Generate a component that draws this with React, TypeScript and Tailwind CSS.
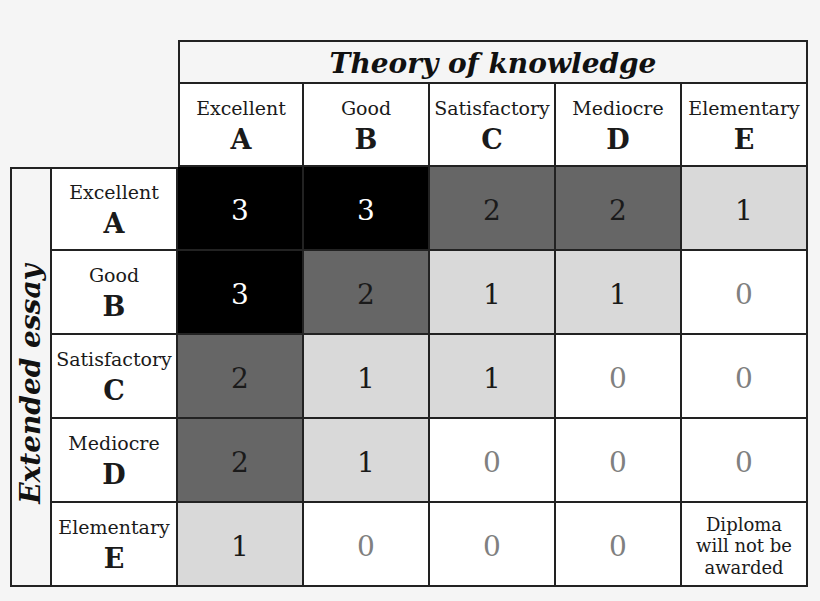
import React from "react";

const grades = [
  ["Excellent", "A"],
  ["Good", "B"],
  ["Satisfactory", "C"],
  ["Mediocre", "D"],
  ["Elementary", "E"],
];

const data: (number | null)[][] = [
  [3, 3, 2, 2, 1],
  [3, 2, 1, 1, 0],
  [2, 1, 1, 0, 0],
  [2, 1, 0, 0, 0],
  [1, 0, 0, 0, null],
];

function bgFor(v: number | null) {
  if (v === 3) return "#000000";
  if (v === 2) return "#666666";
  if (v === 1) return "#d9d9d9";
  return "#ffffff";
}
function fgFor(v: number | null) {
  if (v === 3) return "#ffffff";
  if (v === 0) return "#808080";
  return "#1a1a1a";
}

const font = { fontFamily: '"DejaVu Serif", serif' };

function Label({ w, l }: { w: string; l: string }) {
  return (
    <div className="flex flex-col items-center text-[#1a1a1a] pt-[6px]">
      <span className="text-[19px] leading-[24px]">{w}</span>
      <span className="text-[27px] leading-[40px] font-bold">{l}</span>
    </div>
  );
}

export default function App() {
  return (
    <div
      className="w-[820px] h-[601px] bg-[#f5f5f5] pl-[10px] pt-[40px] overflow-hidden"
      style={font}
    >
      <div className="grid grid-cols-[42px_126px_126px_126px_126px_126px_126px] grid-rows-[44px_83px_84px_84px_84px_84px_84px]">
        {/* Title */}
        <div className="col-start-3 col-span-5 row-start-1 border-2 border-[#222] bg-[#f5f5f5] flex items-center justify-center pt-[3px] text-[28px] font-bold italic text-[#111]">
          Theory of knowledge
        </div>
        {/* Column headers */}
        {grades.map(([w, l], i) => (
          <div
            key={l}
            className={
              "row-start-2 border-r-2 border-b-2 border-[#222] bg-white flex items-center justify-center " +
              (i === 0 ? "border-l-2" : "")
            }
            style={{ gridColumnStart: i + 3 }}
          >
            <Label w={w} l={l} />
          </div>
        ))}
        {/* Extended essay */}
        <div className="col-start-1 row-start-3 row-span-5 border-2 border-[#222] bg-[#f5f5f5] flex items-center justify-center">
          <span className="-rotate-90 whitespace-nowrap text-[28px] font-bold italic text-[#111] translate-y-[7px]">
            Extended essay
          </span>
        </div>
        {/* Rows */}
        {data.map((row, ri) => (
          <React.Fragment key={ri}>
            <div
              className={
                "col-start-2 border-r-2 border-b-2 border-[#222] bg-white flex items-center justify-center " +
                (ri === 0 ? "border-t-2" : "")
              }
              style={{ gridRowStart: ri + 3 }}
            >
              <Label w={grades[ri][0]} l={grades[ri][1]} />
            </div>
            {row.map((v, ci) => (
              <div
                key={ci}
                className="border-r-2 border-b-2 border-[#222] flex items-center justify-center pt-[5px]"
                style={{
                  gridRowStart: ri + 3,
                  gridColumnStart: ci + 3,
                  backgroundColor: bgFor(v),
                  color: fgFor(v),
                }}
              >
                {v === null ? (
                  <div className="-mt-[1px] text-[18px] leading-[21.5px] text-center text-[#1a1a1a]">
                    Diploma
                    <br />
                    will not be
                    <br />
                    awarded
                  </div>
                ) : (
                  <span className="text-[28px]">{v}</span>
                )}
              </div>
            ))}
          </React.Fragment>
        ))}
      </div>
    </div>
  );
}
